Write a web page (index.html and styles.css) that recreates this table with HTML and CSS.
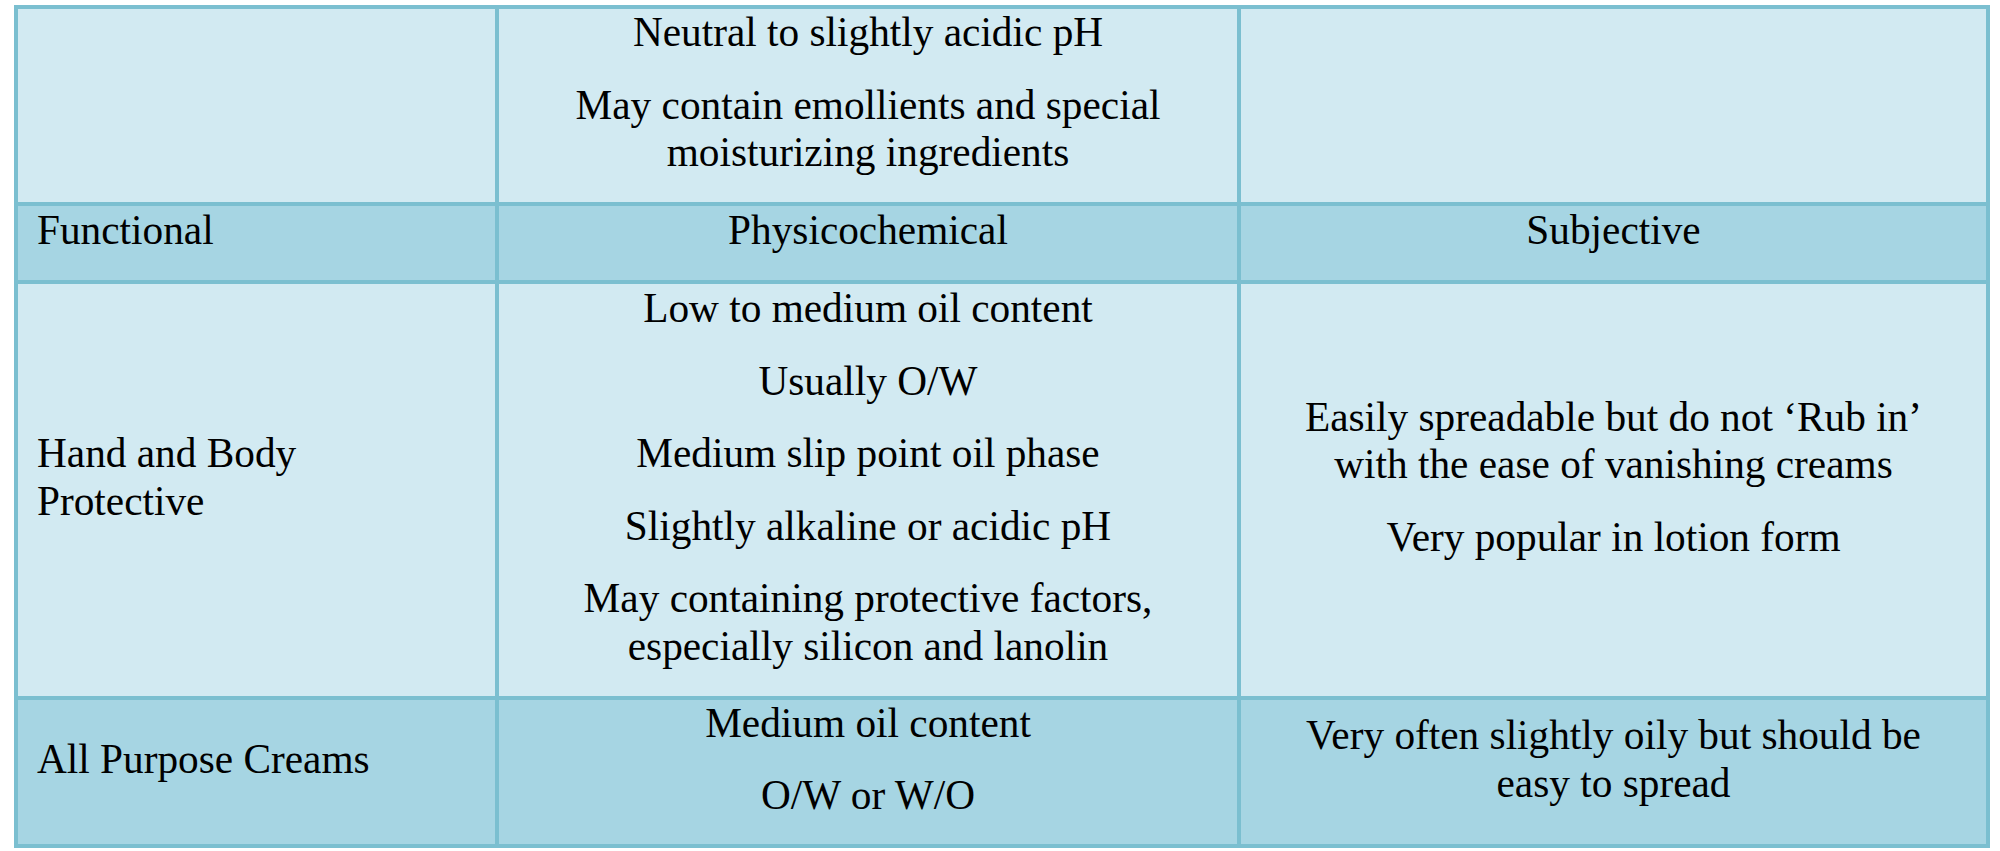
FILE: index.html
```html
<!DOCTYPE html>
<html lang="en">
<head>
<meta charset="utf-8">
<title>Cream characteristics</title>
<link rel="stylesheet" href="styles.css">
</head>
<body>
<div class="table">
  <div class="cell light"></div>
  <div class="cell light center">
    <p>Neutral to slightly acidic pH</p>
    <p>May contain emollients and special<br>moisturizing ingredients</p>
  </div>
  <div class="cell light"></div>

  <div class="cell dark left"><p>Functional</p></div>
  <div class="cell dark center"><p>Physicochemical</p></div>
  <div class="cell dark center"><p>Subjective</p></div>

  <div class="cell light left"><p>Hand and Body<br>Protective</p></div>
  <div class="cell light center">
    <p>Low to medium oil content</p>
    <p>Usually O/W</p>
    <p>Medium slip point oil phase</p>
    <p>Slightly alkaline or acidic pH</p>
    <p>May containing protective factors,<br>especially silicon and lanolin</p>
  </div>
  <div class="cell light center">
    <p>Easily spreadable but do not ‘Rub in’<br>with the ease of vanishing creams</p>
    <p>Very popular in lotion form</p>
  </div>

  <div class="cell dark left"><p>All Purpose Creams</p></div>
  <div class="cell dark center">
    <p>Medium oil content</p>
    <p>O/W or W/O</p>
  </div>
  <div class="cell dark center">
    <p>Very often slightly oily but should be<br>easy to spread</p>
  </div>
</div>
</body>
</html>
```

FILE: styles.css
```css
html, body {
  margin: 0;
  padding: 0;
  background: #ffffff;
}

body {
  font-family: "Liberation Serif", "Times New Roman", serif;
  font-size: 41.3px;
  line-height: 47.5px;
  color: #000000;
}

.table {
  display: grid;
  grid-template-columns: 477px 738px 745px;
  grid-template-rows: 193px 74px 412px 144px;
  gap: 4px;
  padding: 4px;
  width: 1968px;
  margin: 5px 0 0 14px;
  background: #7bbfd0;
}

.cell {
  display: flex;
  flex-direction: column;
  justify-content: center;
  overflow: visible;
}

.light {
  background: #d2eaf2;
}

.dark {
  background: #a6d5e3;
}

.left {
  padding-left: 19px;
  text-align: left;
}

.center {
  text-align: center;
}

.cell p {
  margin: 0 0 25px 0;
  white-space: nowrap;
}
```
